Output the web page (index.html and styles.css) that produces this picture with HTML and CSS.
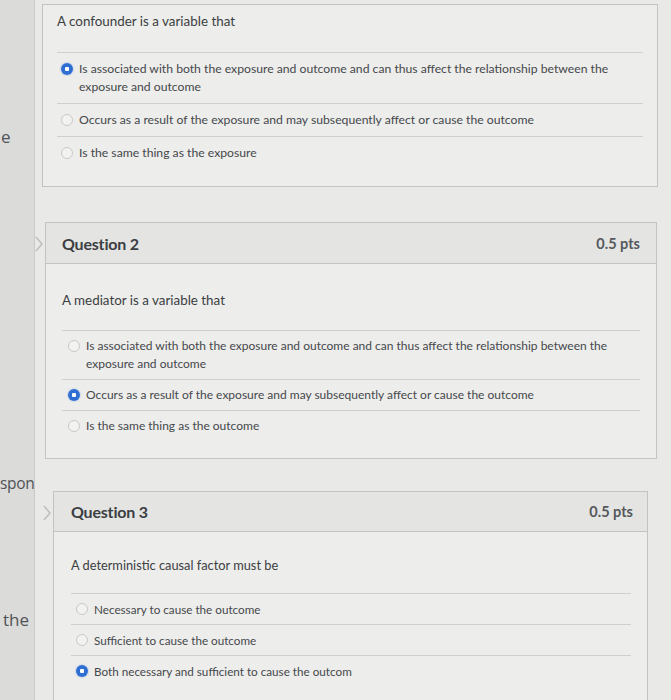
FILE: index.html
```html
<!DOCTYPE html>
<html lang="en">
<head>
<meta charset="utf-8">
<title>Quiz</title>
<link rel="stylesheet" href="styles.css">
</head>
<body>
<div class="page">
  <aside class="side">
    <span class="frag frag-e">e</span>
    <span class="frag frag-spon">spon</span>
    <span class="frag frag-the">the</span>
  </aside>
  <main class="main">
    <section class="card card-1">
      <div class="body body-1">
        <p class="q-text">A confounder is a variable that</p>
        <ul class="answers">
          <li class="answer"><span class="radio checked"></span><span class="a-text">Is associated with both the exposure and outcome and can thus affect the relationship between the exposure and outcome</span></li>
          <li class="answer"><span class="radio"></span><span class="a-text">Occurs as a result of the exposure and may subsequently affect or cause the outcome</span></li>
          <li class="answer"><span class="radio"></span><span class="a-text">Is the same thing as the exposure</span></li>
        </ul>
      </div>
    </section>

    <section class="card card-2">
      <header class="head">
        <svg class="chev" width="8" height="16" viewBox="0 0 8 16"><polyline points="1,1 7,8 1,15" fill="none" stroke="#bdbdbb" stroke-width="1.5"/></svg>
        <h2 class="title">Question 2</h2>
        <span class="pts">0.5 pts</span>
      </header>
      <div class="body body-2">
        <p class="q-text">A mediator is a variable that</p>
        <ul class="answers">
          <li class="answer"><span class="radio"></span><span class="a-text">Is associated with both the exposure and outcome and can thus affect the relationship between the exposure and outcome</span></li>
          <li class="answer"><span class="radio checked"></span><span class="a-text">Occurs as a result of the exposure and may subsequently affect or cause the outcome</span></li>
          <li class="answer"><span class="radio"></span><span class="a-text">Is the same thing as the outcome</span></li>
        </ul>
      </div>
    </section>

    <section class="card card-3">
      <header class="head head-3">
        <svg class="chev" width="8" height="16" viewBox="0 0 8 16"><polyline points="1,1 7,8 1,15" fill="none" stroke="#bdbdbb" stroke-width="1.5"/></svg>
        <h2 class="title">Question 3</h2>
        <span class="pts">0.5 pts</span>
      </header>
      <div class="body body-3">
        <p class="q-text">A deterministic causal factor must be</p>
        <ul class="answers">
          <li class="answer"><span class="radio"></span><span class="a-text">Necessary to cause the outcome</span></li>
          <li class="answer"><span class="radio"></span><span class="a-text">Sufficient to cause the outcome</span></li>
          <li class="answer"><span class="radio checked"></span><span class="a-text">Both necessary and sufficient to cause the outcom</span></li>
        </ul>
      </div>
    </section>
  </main>
</div>
</body>
</html>
```

FILE: styles.css
```css
* { box-sizing: border-box; }

html, body {
  margin: 0;
  padding: 0;
}

body {
  width: 671px;
  height: 700px;
  overflow: hidden;
  background: #e6e6e4;
  font-family: "Lato", "Open Sans", sans-serif;
  color: #3e4145;
}

.page {
  display: flex;
  height: 700px;
}

.side {
  width: 35px;
  flex: none;
  background: #dbdbd9;
  border-right: 1px solid #cacac8;
  display: flex;
  flex-direction: column;
  overflow: hidden;
  font-family: "Open Sans", "Lato", sans-serif;
  font-size: 17px;
  color: #505357;
}

.frag {
  display: block;
  line-height: 20px;
  white-space: nowrap;
}

.frag-e { margin-top: 127px; padding-left: 1px; }
.frag-spon { margin-top: 326px; font-size: 15.5px; letter-spacing: -0.3px; }
.frag-the { margin-top: 117px; padding-left: 3px; }

.main {
  flex: 1;
  display: flex;
  flex-direction: column;
  background: #e9e9e7;
}

.card {
  background: #ededeb;
  border: 1px solid #c3c3c1;
  flex: none;
}

.card-1 { margin: 4px 13px 0 7px; }
.card-2 { margin: 35px 14px 0 10px; }
.card-3 { margin: 32px 23px 0 18px; }

.head {
  position: relative;
  display: flex;
  align-items: center;
  justify-content: space-between;
  height: 41px;
  padding: 0 16px 0 16px;
  background: #e4e4e2;
  border-bottom: 1px solid #c3c3c1;
}

.head-3 {
  height: 40px;
  padding: 0 14px 0 17px;
}

.chev {
  position: absolute;
  left: -11px;
  top: 13px;
}

.title {
  margin: 0;
  font-size: 16px;
  font-weight: 700;
  color: #3b3e42;
  letter-spacing: -0.2px;
}

.pts {
  font-size: 14.5px;
  font-weight: 700;
  color: #55585c;
}

.body-1 { padding: 6px 14px 17px 14px; }
.body-2 { padding: 26px 16px 17px 16px; }
.body-3 { padding: 23px 16px 20px 17px; }

.q-text {
  margin: 0 0 21px 0;
  font-size: 13.4px;
  line-height: 20px;
  color: #3b3e42;
}

.body-2 .q-text { margin-bottom: 20px; }
.body-3 .q-text { margin-bottom: 18px; font-size: 12.8px; }

.answers {
  list-style: none;
  margin: 0;
  padding: 0;
}

.answer {
  display: flex;
  align-items: flex-start;
  gap: 6px;
  padding: 7px 0 7px 4px;
  border-top: 1px solid #d0d0ce;
}

.body-2 .answer { padding: 6px 0 6px 6px; }
.body-3 .answer { padding: 6px 0 6px 5px; }

.radio {
  flex: none;
  width: 12px;
  height: 12px;
  margin-top: 3px;
  border-radius: 50%;
  border: 1px solid #c9c9c7;
  background: #f2f2f0;
}

.radio.checked {
  border: none;
  background: radial-gradient(circle, #ffffff 0 2px, #2f6fd3 2.5px);
  box-shadow: 0 0 2px rgba(47, 111, 211, 0.5);
}

.a-text {
  font-size: 12.2px;
  line-height: 18px;
  color: #45484c;
}

.body-2 .a-text { font-size: 12px; }
.body-3 .a-text { font-size: 11.7px; }
```
